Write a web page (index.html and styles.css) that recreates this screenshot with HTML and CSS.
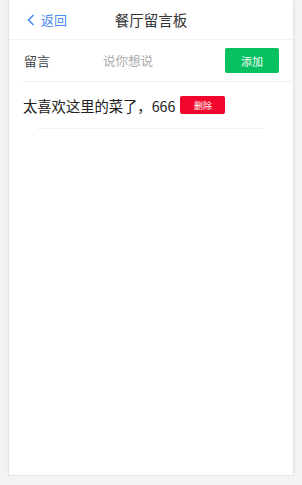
FILE: index.html
```html
<!DOCTYPE html>
<html lang="zh">
<head>
<meta charset="utf-8">
<title>餐厅留言板</title>
<link rel="stylesheet" href="styles.css">
</head>
<body>
<div class="card">
  <div class="header">
    <a class="back" href="#">
      <svg class="chev" width="8" height="12" viewBox="0 0 8 12"><polyline points="6.5,1 1.5,6 6.5,11" fill="none" stroke="#4a8af4" stroke-width="1.6"/></svg>
      <span>返回</span>
    </a>
    <div class="title">餐厅留言板</div>
    <div class="spacer"></div>
  </div>
  <div class="form">
    <label class="label">留言</label>
    <input class="input" type="text" placeholder="说你想说">
    <button class="add">添加</button>
  </div>
  <div class="item">
    <span class="text">太喜欢这里的菜了，666</span>
    <button class="del">删除</button>
  </div>
  <div class="divider"></div>
</div>
</body>
</html>
```
FILE: styles.css
```css
* { box-sizing: border-box; }
body {
  margin: 0;
  background: #f4f4f4;
  font-family: "Noto Sans CJK SC", "Noto Sans", sans-serif;
  color: #333;
}
.card {
  margin-left: 8px;
  width: 286px;
  height: 476px;
  background: #fff;
  border: 1px solid #e4e4e4;
  border-top: none;
  box-shadow: 0 0 6px rgba(0,0,0,0.06);
}
.header {
  height: 40px;
  display: grid;
  grid-template-columns: 1fr auto 1fr;
  align-items: center;
  border-bottom: 1px solid #f3f3f3;
}
.back {
  display: flex;
  align-items: center;
  gap: 6px;
  padding-left: 18px;
  color: #4a8af4;
  font-size: 13px;
  text-decoration: none;
}
.title {
  font-size: 14.5px;
  color: #333;
}
.form {
  margin-left: 14px;
  height: 42px;
  display: flex;
  align-items: center;
  border-bottom: 1px solid #f0f0f0;
  padding-right: 14px;
}
.label {
  width: 80px;
  font-size: 13px;
  color: #444;
  padding-left: 1px;
}
.input {
  flex: 1;
  border: none;
  outline: none;
  font-family: inherit;
  font-size: 12.5px;
  padding: 0;
  color: #333;
  min-width: 0;
}
.input::placeholder { color: #aaa; }
.add {
  width: 54px;
  height: 25px;
  border: none;
  border-radius: 2px;
  background: #07c160;
  color: #fff;
  font-family: inherit;
  font-size: 11px;
  padding: 0;
}
.item {
  margin-left: 14px;
  height: 46px;
  display: flex;
  align-items: center;
  gap: 5px;
}
.text {
  font-size: 14.3px;
  color: #222;
}
.del {
  width: 45px;
  height: 18px;
  border: none;
  border-radius: 2px;
  background: #f0072b;
  color: #fff;
  font-family: inherit;
  font-size: 9px;
  padding: 0;
}
.divider {
  width: 80%;
  margin: 0 auto;
  border-top: 1px solid #f3f3f3;
}
```
